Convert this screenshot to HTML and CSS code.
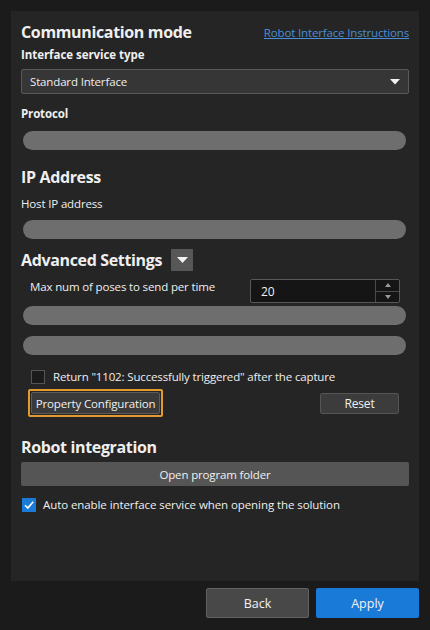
FILE: index.html
```html
<!DOCTYPE html>
<html>
<head>
<meta charset="utf-8">
<link rel="stylesheet" href="styles.css">
</head>
<body>
<div class="panel">
  <div class="head-row">
    <span class="h1">Communication mode</span>
    <a class="link" href="#">Robot Interface Instructions</a>
  </div>
  <div class="label bold l-type">Interface service type</div>
  <div class="select">
    <span>Standard Interface</span>
    <svg class="caret" width="10" height="6" viewBox="0 0 10 6"><path d="M0 0H10L5 5.5Z" fill="#f2f2f2"/></svg>
  </div>
  <div class="label bold l-proto">Protocol</div>
  <div class="pill p1"></div>
  <div class="h1 h-ip">IP Address</div>
  <div class="label l-host">Host IP address</div>
  <div class="pill p2"></div>
  <div class="adv-row">
    <span class="h1">Advanced Settings</span>
    <span class="toggle"><svg width="11" height="6" viewBox="0 0 11 6"><path d="M0 0H11L5.5 6Z" fill="#f2f2f2"/></svg></span>
  </div>
  <div class="max-row">
    <span class="label">Max num of poses to send per time</span>
    <div class="spin">
      <span class="spin-val">20</span>
      <span class="spin-btns">
        <span class="sb"><svg width="6" height="4" viewBox="0 0 6 4"><path d="M0 4H6L3 0Z" fill="#9a9a9a"/></svg></span>
        <span class="sb"><svg width="6" height="4" viewBox="0 0 6 4"><path d="M0 0H6L3 4Z" fill="#9a9a9a"/></svg></span>
      </span>
    </div>
  </div>
  <div class="pill p3"></div>
  <div class="pill p4"></div>
  <div class="check-row c1">
    <span class="cb"></span>
    <span class="label">Return "1102: Successfully triggered" after the capture</span>
  </div>
  <div class="btn-row">
    <span class="focus"><button class="btn prop">Property Configuration</button></span>
    <button class="btn reset">Reset</button>
  </div>
  <div class="h1 h-robot">Robot integration</div>
  <button class="btn open">Open program folder</button>
  <div class="check-row c2">
    <span class="cb checked"><svg width="14" height="14" viewBox="0 0 14 14"><path d="M3 7.2L5.8 10L11.2 3.8" fill="none" stroke="#fff" stroke-width="1.6"/></svg></span>
    <span class="label">Auto enable interface service when opening the solution</span>
  </div>
</div>
<div class="footer">
  <button class="fbtn back">Back</button>
  <button class="fbtn apply">Apply</button>
</div>
</body>
</html>
```

FILE: styles.css
```css
* { box-sizing: border-box; }
html, body { margin: 0; padding: 0; }
body {
  width: 430px;
  height: 630px;
  background: #1b1b1b;
  font-family: "Open Sans", "Noto Sans", sans-serif;
  color: #efefef;
  padding: 11px 11px 0 11px;
  overflow: hidden;
}
.panel {
  background: #252525;
  height: 570px;
  padding: 10px 10px 0 10px;
}
.h1 {
  font-size: 16px;
  font-weight: 700;
  line-height: 22px;
  letter-spacing: -0.35px;
}
.head-row {
  display: flex;
  justify-content: space-between;
  align-items: center;
  height: 22px;
}
.link {
  color: #4a8fd8;
  font-size: 11.5px;
  text-decoration: underline;
  letter-spacing: -0.15px;
}
.label {
  font-size: 11.5px;
  line-height: 16px;
  letter-spacing: -0.15px;
}
.bold { font-weight: 700; }
.l-type { margin-top: 4px; letter-spacing: -0.05px; }
.select {
  margin-top: 6px;
  height: 25px;
  background: #363636;
  border: 1px solid #5a5a5a;
  border-radius: 2px;
  display: flex;
  align-items: center;
  justify-content: space-between;
  padding: 0 8px 0 8px;
  font-size: 11.5px;
  letter-spacing: -0.15px;
}
.caret { margin-top: 1px; }
.l-proto { margin-top: 12px; }
.pill {
  height: 19px;
  background: #6e6e6e;
  border-radius: 10px;
  margin-left: 2px;
  margin-right: 3px;
}
.p1 { margin-top: 9px; }
.h-ip { margin-top: 16px; }
.l-host { margin-top: 8px; }
.p2 { margin-top: 8px; }
.adv-row {
  margin-top: 10px;
  height: 22px;
  display: flex;
  align-items: center;
  gap: 9px;
}
.toggle {
  width: 22px;
  height: 22px;
  background: #575757;
  display: flex;
  align-items: center;
  justify-content: center;
}
.max-row {
  margin-top: 8px;
  display: flex;
  justify-content: space-between;
  padding-left: 9px;
  padding-right: 9px;
  height: 24px;
}
.spin {
  width: 150px;
  height: 24px;
  background: #151515;
  border: 1px solid #585858;
  border-radius: 2px;
  display: flex;
}
.spin-val {
  flex: 1;
  font-size: 12px;
  padding-left: 10px;
  line-height: 24px;
}
.spin-btns {
  width: 24px;
  border-left: 1px solid #4a4a4a;
  display: flex;
  flex-direction: column;
}
.sb {
  flex: 1;
  display: flex;
  align-items: center;
  justify-content: center;
}
.sb + .sb { border-top: 1px solid #4a4a4a; }
.p3 { margin-top: 3px; }
.p4 { margin-top: 11px; }
.check-row {
  display: flex;
  align-items: center;
  height: 16px;
  gap: 8px;
}
.c1 { margin-top: 14px; padding-left: 10px; }
.cb {
  width: 14px;
  height: 14px;
  background: #1b1b1b;
  border: 1px solid #555;
  display: inline-flex;
}
.cb.checked {
  background: #1a7ad8;
  border: none;
}
.btn {
  font-family: inherit;
  color: #efefef;
  font-size: 11.5px;
  letter-spacing: -0.15px;
  border-radius: 2px;
  padding: 0;
  cursor: pointer;
}
.btn-row {
  margin-top: 4px;
  height: 28px;
  display: flex;
  justify-content: space-between;
  align-items: center;
  padding-left: 7px;
  padding-right: 10px;
}
.focus {
  border: 2px solid #e49a2c;
  border-radius: 2px;
  padding: 1px;
  display: flex;
}
.prop {
  width: 129px;
  height: 22px;
  background: #3a3a3a;
  border: 1px solid #5c5c5c;
}
.reset {
  width: 79px;
  height: 21px;
  background: #3c3c3c;
  border: 1px solid #555;
  font-size: 12px;
}
.h-robot { margin-top: 19px; }
.open {
  display: block;
  margin-top: 4px;
  width: 100%;
  height: 24px;
  background: #555555;
  border: none;
}
.c2 { margin-top: 11px; padding-left: 1px; gap: 7px; }
.c2 .label { letter-spacing: -0.08px; }
.footer {
  display: flex;
  justify-content: flex-end;
  gap: 7px;
  margin-top: 7px;
}
.fbtn {
  width: 103px;
  height: 30px;
  font-family: inherit;
  font-size: 12.5px;
  color: #f2f2f2;
  border-radius: 2px;
  padding: 0;
}
.back {
  background: #484848;
  border: 1px solid #626262;
}
.apply {
  background: #1a7ad8;
  border: none;
}
```
